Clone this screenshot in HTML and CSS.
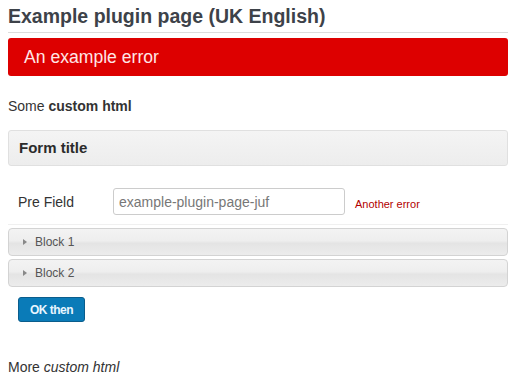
FILE: index.html
```html
<!DOCTYPE html>
<html lang="en">
<head>
    <meta charset="UTF-8">
    <title>Example plugin page</title>
    <link rel="stylesheet" href="styles.css">
</head>
<body>
    <div class="page">
        <h1 class="page-title">Example plugin page (UK English)</h1>

        <div class="alert-error">An example error</div>

        <p class="custom">Some <b>custom html</b></p>

        <form class="plugin-form">
            <div class="form-title">Form title</div>

            <div class="field-row">
                <label for="pre">Pre Field</label>
                <input type="text" id="pre" value="example-plugin-page-juf">
                <span class="field-error">Another error</span>
            </div>

            <div class="block">
                <span class="arrow"></span>Block 1
            </div>
            <div class="block">
                <span class="arrow"></span>Block 2
            </div>

            <div class="form-actions">
                <button type="button" class="btn-primary">OK then</button>
            </div>
        </form>

        <p class="custom more">More <i>custom html</i></p>
    </div>
</body>
</html>
```

FILE: styles.css
```css
body {
    font-family: "Liberation Sans", Arial, sans-serif;
    font-size: 14px;
    color: #333;
    margin: 0;
    background-color: #fff;
}

.page {
    padding: 0 9px 0 8px;
}

.page-title {
    font-size: 19.5px;
    font-weight: bold;
    color: #3d4249;
    margin: 0;
    padding: 6px 0 6px;
    border-bottom: 1px solid #dcdcdc;
    line-height: 20px;
}

.alert-error {
    margin-top: 5px;
    background-color: #dd0000;
    color: #ffe6e6;
    font-size: 17.6px;
    border-radius: 3px;
    height: 38px;
    line-height: 38px;
    padding: 0 16px;
}

.custom {
    margin: 22px 0 0;
    line-height: 16px;
}

.plugin-form {
    margin-top: 16px;
}

.form-title {
    height: 34px;
    line-height: 34px;
    padding: 0 10px;
    font-size: 15px;
    font-weight: bold;
    color: #2b2b2b;
    background: linear-gradient(#f4f4f4, #ededed);
    border: 1px solid #e0e0e0;
    border-radius: 3px;
}

.field-row {
    display: flex;
    align-items: center;
    padding: 22px 0 9px 10px;
    border-bottom: 1px solid #f0f0f0;
    margin-bottom: 3px;
}

.field-row label {
    width: 95px;
    font-size: 14px;
    color: #333;
}

.field-row input {
    width: 232px;
    height: 27px;
    box-sizing: border-box;
    border: 1px solid #ccc;
    border-radius: 3px;
    padding: 0 5px;
    font-family: inherit;
    font-size: 14px;
    color: #777;
}

.field-error {
    margin-left: 10px;
    font-size: 11px;
    color: #b20000;
    padding-top: 4px;
}

.block {
    height: 26px;
    line-height: 26px;
    margin-bottom: 3px;
    padding-left: 14px;
    font-size: 12px;
    color: #555;
    border: 1px solid #d3d3d3;
    border-radius: 4px;
    background: linear-gradient(#f3f3f3 0%, #eeeeee 45%, #e4e4e4 55%, #ececec 100%);
}

.arrow {
    display: inline-block;
    width: 0;
    height: 0;
    border-top: 3px solid transparent;
    border-bottom: 3px solid transparent;
    border-left: 4px solid #888;
    margin-right: 8px;
    vertical-align: 1px;
}

.form-actions {
    padding: 7px 0 0 10px;
}

.btn-primary {
    width: 67px;
    height: 25px;
    border: 1px solid #0a5d8c;
    border-radius: 3px;
    background-color: #0a7bb8;
    color: #e8f6ff;
    font-family: inherit;
    font-size: 12px;
    font-weight: bold;
    letter-spacing: -0.5px;
    cursor: pointer;
}

.more {
    margin-top: 37px;
}
```
